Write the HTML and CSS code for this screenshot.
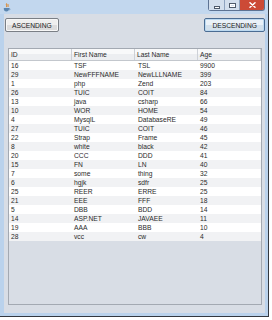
FILE: index.html
```html
<!DOCTYPE html>
<html>
<head>
<meta charset="utf-8">
<title>Sort table</title>
<link rel="stylesheet" href="styles.css">
</head>
<body>
<div class="window">
  <div class="titlebar">
    <svg class="appicon" width="8" height="9" viewBox="0 0 8 9">
      <path d="M3.6 0.4 C2.6 1.5 4.6 2.4 3.5 4.1 M5.2 1 C4.4 2 5.8 2.7 5 3.9" stroke="#e07a10" stroke-width="0.9" fill="none"/>
      <path d="M0.8 5 H6 V6.1 C6 7.6 5 8.5 3.4 8.5 S0.8 7.6 0.8 6.1 Z" fill="#5b86b0"/>
      <path d="M6 5.4 C7.4 5.4 7.4 7 6 7" stroke="#5b86b0" stroke-width="0.7" fill="none"/>
    </svg>
    <div class="caption-buttons">
      <div class="cb cb-min"><div class="glyph-min"></div></div>
      <div class="cb cb-max"><div class="glyph-max"></div></div>
      <div class="cb cb-close">
        <svg width="7" height="6" viewBox="0 0 7 6"><path d="M1 0.8 L6 5.2 M6 0.8 L1 5.2" stroke="#ffffff" stroke-width="1.5" stroke-linecap="round"/></svg>
      </div>
    </div>
  </div>
  <div class="frame">
    <div class="client">
      <div class="toolbar">
        <button class="btn">ASCENDING</button>
        <button class="btn btn-focus">DESCENDING</button>
      </div>
      <div class="scrollpane">
        <div class="thead">
          <div class="th">ID</div>
          <div class="th">First Name</div>
          <div class="th">Last Name</div>
          <div class="th">Age</div>
        </div>
        <div class="tbody">
          <div class="tr"><span>16</span><span>TSF</span><span>TSL</span><span>9900</span></div>
          <div class="tr"><span>29</span><span>NewFFFNAME</span><span>NewLLLNAME</span><span>399</span></div>
          <div class="tr"><span>1</span><span>php</span><span>Zend</span><span>203</span></div>
          <div class="tr"><span>26</span><span>TUIC</span><span>COIT</span><span>84</span></div>
          <div class="tr"><span>13</span><span>java</span><span>csharp</span><span>66</span></div>
          <div class="tr"><span>10</span><span>WOR</span><span>HOME</span><span>54</span></div>
          <div class="tr"><span>4</span><span>MysqlL</span><span>DatabaseRE</span><span>49</span></div>
          <div class="tr"><span>27</span><span>TUIC</span><span>COIT</span><span>46</span></div>
          <div class="tr"><span>22</span><span>Strap</span><span>Frame</span><span>45</span></div>
          <div class="tr"><span>8</span><span>white</span><span>black</span><span>42</span></div>
          <div class="tr"><span>20</span><span>CCC</span><span>DDD</span><span>41</span></div>
          <div class="tr"><span>15</span><span>FN</span><span>LN</span><span>40</span></div>
          <div class="tr"><span>7</span><span>some</span><span>thing</span><span>32</span></div>
          <div class="tr"><span>6</span><span>hgjk</span><span>sdfr</span><span>25</span></div>
          <div class="tr"><span>25</span><span>REER</span><span>ERRE</span><span>25</span></div>
          <div class="tr"><span>21</span><span>EEE</span><span>FFF</span><span>18</span></div>
          <div class="tr"><span>5</span><span>DBB</span><span>BDD</span><span>14</span></div>
          <div class="tr"><span>14</span><span>ASP.NET</span><span>JAVAEE</span><span>11</span></div>
          <div class="tr"><span>19</span><span>AAA</span><span>BBB</span><span>10</span></div>
          <div class="tr"><span>28</span><span>vcc</span><span>cw</span><span>4</span></div>
        </div>
      </div>
    </div>
  </div>
</div>
</body>
</html>
```

FILE: styles.css
```css
* { box-sizing: border-box; }
html, body { margin: 0; padding: 0; background: #ffffff; }
body {
  font-family: "Liberation Sans", Arial, sans-serif;
  font-size: 6.7px;
  color: #2a2a2a;
}
.window {
  width: 269px;
  height: 317px;
  background: #bad2ec;
  border-right: 1px solid #33383f;
  border-bottom: 1px solid #33383f;
}
.titlebar {
  display: block;
  height: 14px;
  padding-left: 3px;
  background: #c2d7ee;
}
.appicon { float: left; margin-top: 3px; display: block; }
.caption-buttons {
  float: right;
  width: 57px;
  height: 11px;
  margin-right: 3px;
  display: flex;
  border: 1px solid #5d7393;
  border-top: 0;
  border-radius: 0 0 3px 3px;
  background: #b8cbe2;
}
.cb {
  flex: none;
  height: 10px;
  display: flex;
  align-items: center;
  justify-content: center;
}
.cb-min, .cb-max {
  width: 16px;
  background: #d3dfed;
  border-right: 1px solid #8ea3bf;
}
.cb-max { width: 15px; }
.glyph-min {
  width: 6px;
  height: 3px;
  margin-top: 4px;
  background: #ffffff;
  border: 1px solid #4e5a6a;
}
.glyph-max {
  width: 7px;
  height: 5px;
  border: 1px solid #4e5a6a;
  box-shadow: inset 0 0 0 1px #ffffff;
}
.cb-close {
  width: 24px;
  border-radius: 0 0 2px 0;
  background: #cc4a36;
}
.cb-close svg { display: block; }
.frame {
  height: 303px;
  display: flex;
  padding: 0 3px 4px 4px;
}
.client {
  flex: 1;
  display: flex;
  flex-direction: column;
  background: #d8dde5;
  padding: 4px 0 8px 0;
}
.toolbar {
  display: flex;
  justify-content: space-between;
  height: 14px;
  padding-left: 1px;
}
.btn {
  font-family: inherit;
  font-size: 6.7px;
  color: #222;
  height: 14px;
  margin: 0;
  padding: 0 6px;
  border: 1px solid #7a7f86;
  border-radius: 2px;
  background: #dcdcdd;
  box-shadow: inset 0 0 0 1px #f7f7f7, inset 0 6px 0 #efefef;
}
.btn-focus {
  padding: 0 7px;
  border-color: #4a6c93;
  background: #d3e0ec;
  box-shadow: inset 0 0 0 1px #bcd9f0, inset 0 6px 0 #eaf1f8;
}
.scrollpane {
  flex: 1;
  margin: 16px 3px 0 4px;
  border: 1px solid #a3a9b2;
  background: #d8dde5;
  display: flex;
  flex-direction: column;
}
.thead {
  display: grid;
  grid-template-columns: repeat(4, 63px);
  height: 12px;
  background: #eceef1;
  box-shadow: inset 0 5px 0 #f8f9fa;
  border-bottom: 1px solid #c3c7cd;
}
.th {
  padding-left: 2px;
  line-height: 11px;
  border-right: 1px solid #cdd1d7;
  white-space: nowrap;
}
.tr {
  display: grid;
  grid-template-columns: repeat(4, 63px);
  height: 9px;
  line-height: 9px;
  background: #ffffff;
}
.tr:nth-child(even) { background: #f1f2f4; }
.tr span {
  padding-left: 2px;
  white-space: nowrap;
}
.tr span:nth-child(3) { padding-left: 3px; }
```
